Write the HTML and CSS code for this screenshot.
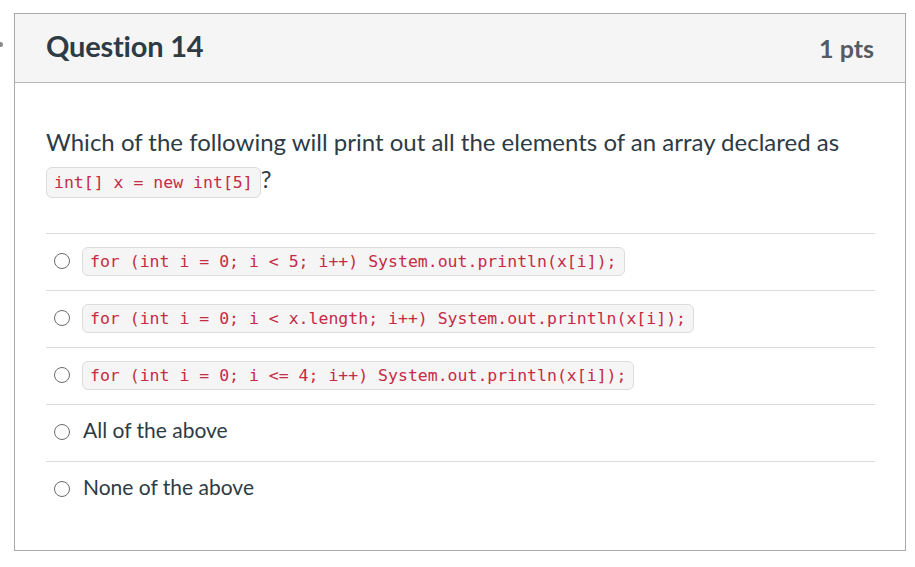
FILE: index.html
```html
<!DOCTYPE html>
<html lang="en">
<head>
<meta charset="utf-8">
<title>Question 14</title>
<link rel="stylesheet" href="styles.css">
</head>
<body>
<span class="edge-dot"></span>
<div class="question">
  <div class="q-header">
    <h2 class="q-title">Question 14</h2>
    <span class="q-points">1 pts</span>
  </div>
  <div class="q-body">
    <p class="q-text">Which of the following will print out all the elements of an array declared as <code class="code">int[] x = new int[5]</code>?</p>
    <div class="answers">
      <label class="answer"><span class="radio"></span><code class="code">for (int i = 0; i &lt; 5; i++) System.out.println(x[i]);</code></label>
      <label class="answer"><span class="radio"></span><code class="code">for (int i = 0; i &lt; x.length; i++) System.out.println(x[i]);</code></label>
      <label class="answer"><span class="radio"></span><code class="code">for (int i = 0; i &lt;= 4; i++) System.out.println(x[i]);</code></label>
      <label class="answer"><span class="radio"></span><span class="answer-text">All of the above</span></label>
      <label class="answer"><span class="radio"></span><span class="answer-text">None of the above</span></label>
    </div>
  </div>
</div>
</body>
</html>
```
FILE: styles.css
```css
html, body {
  margin: 0;
  padding: 0;
  background: #ffffff;
}
body {
  font-family: Lato, "Open Sans", sans-serif;
  color: #2d3b45;
  padding: 13px 0 0 14px;
  position: relative;
}
.edge-dot {
  position: absolute;
  left: -2px;
  top: 42px;
  width: 5px;
  height: 5px;
  border-radius: 50%;
  background: #8a8a8a;
}
.question {
  width: 890px;
  height: 536px;
  border: 1px solid #a9a9a9;
  display: flex;
  flex-direction: column;
}
.q-header {
  height: 68px;
  background: #f5f5f5;
  border-bottom: 1px solid #b8b8b8;
  display: flex;
  align-items: center;
  justify-content: space-between;
  padding: 0 31px 0 31px;
}
.q-title {
  margin: 0;
  font-size: 29px;
  font-weight: 700;
  color: #2d3b45;
  letter-spacing: -0.2px;
  padding-bottom: 5px;
}
.q-points {
  font-size: 25px;
  font-weight: 700;
  color: #555b60;
  padding-bottom: 1px;
}
.q-body {
  padding: 40px 30px 0 31px;
}
.q-text {
  margin: 0;
  font-size: 24px;
  line-height: 37px;
  color: #2d3b45;
}
.code {
  font-family: "DejaVu Sans Mono", "Liberation Mono", monospace;
  font-size: 16.5px;
  color: #c62b45;
  background: #f5f5f5;
  border: 1px solid #dcdcdc;
  border-radius: 6px;
  padding: 5px 7px;
  line-height: 17px;
  white-space: nowrap;
}
.answers {
  margin-top: 36px;
}
.answer {
  display: flex;
  align-items: center;
  height: 54px;
  border-top: 1px solid #dcdcdc;
  padding-left: 8px;
  padding-bottom: 2px;
}
.radio {
  width: 14px;
  height: 14px;
  border: 1.6px solid #6b6b6b;
  border-radius: 50%;
  margin-right: 12px;
  flex: none;
}
.answer .code {
  display: inline-block;
}
.answer-text {
  font-size: 21px;
  color: #2d3b45;
  margin-left: 1px;
  margin-bottom: 5px;
}
```
